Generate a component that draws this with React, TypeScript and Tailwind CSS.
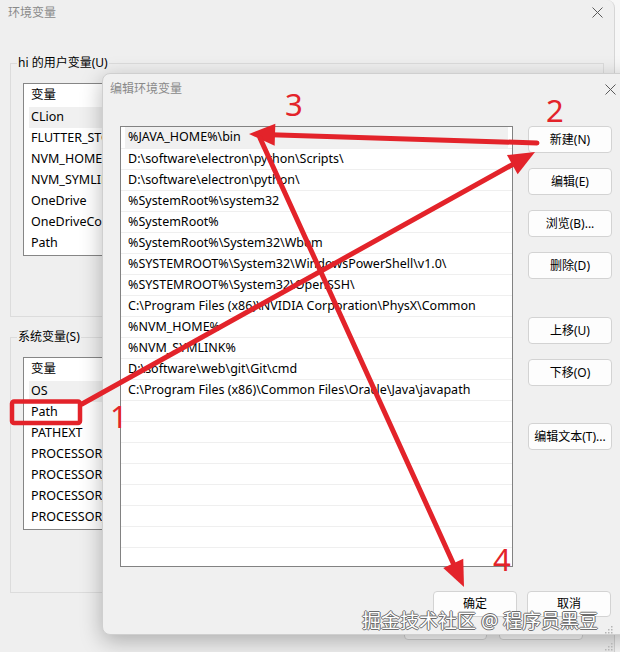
import React from "react";

const RED = "#e3232a";

const userVars = ["CLion", "FLUTTER_STORAGE_BASE_URL", "NVM_HOME", "NVM_SYMLINK", "OneDrive", "OneDriveConsumer", "Path"];
const sysVars = ["OS", "Path", "PATHEXT", "PROCESSOR_ARCHITECTURE", "PROCESSOR_IDENTIFIER", "PROCESSOR_LEVEL", "PROCESSOR_REVISION"];
const pathEntries = [
  "%JAVA_HOME%\\bin",
  "D:\\software\\electron\\python\\Scripts\\",
  "D:\\software\\electron\\python\\",
  "%SystemRoot%\\system32",
  "%SystemRoot%",
  "%SystemRoot%\\System32\\Wbem",
  "%SYSTEMROOT%\\System32\\WindowsPowerShell\\v1.0\\",
  "%SYSTEMROOT%\\System32\\OpenSSH\\",
  "C:\\Program Files (x86)\\NVIDIA Corporation\\PhysX\\Common",
  "%NVM_HOME%",
  "%NVM_SYMLINK%",
  "D:\\software\\web\\git\\Git\\cmd",
  "C:\\Program Files (x86)\\Common Files\\Oracle\\Java\\javapath",
];

function CloseIcon() {
  return (
    <svg width="11" height="11" viewBox="0 0 11 11">
      <path d="M0.5 0.5 L10.5 10.5 M10.5 0.5 L0.5 10.5" stroke="#5a5a5a" strokeWidth="1" fill="none" />
    </svg>
  );
}

function WinButton({ label, className = "" }: { label: string; className?: string }) {
  return (
    <div
      className={`flex h-[27px] w-[84px] items-center justify-center rounded-[4px] border border-[#d3d3d3] bg-[#fdfdfd] text-[12px] text-black ${className}`}
    >
      {label}
    </div>
  );
}

function VarList({ items }: { items: string[] }) {
  return (
    <div className="h-[173px] w-[560px] overflow-hidden border border-[#868686] bg-white">
      <div className="flex h-[23px] items-center pl-[7px] text-[12.5px] text-black">变量</div>
      {items.map((name, i) => (
        <div key={name} className="flex h-[21px] items-center px-[5px]">
          <div className={`flex h-full w-full items-center pl-[2px] text-[12.5px] text-black ${i === 0 ? "bg-[#f0f0f0]" : ""}`}>
            {name}
          </div>
        </div>
      ))}
    </div>
  );
}

function GroupBox({ title, items, className = "" }: { title: string; items: string[]; className?: string }) {
  return (
    <fieldset className={`mx-[10px] h-[264px] border border-[#dcdcdc] ${className}`}>
      <legend className="ml-[6px] px-[1px] text-[12px] leading-[16px] text-black">{title}</legend>
      <div className="px-[12px] pt-[12px]">
        <VarList items={items} />
      </div>
    </fieldset>
  );
}

// one straight arrow: shaft plus a filled triangular head ending at (x2, y2)
function Arrow({ x1, y1, x2, y2 }: { x1: number; y1: number; x2: number; y2: number }) {
  const len = 26;
  const half = 11;
  const dx = x2 - x1;
  const dy = y2 - y1;
  const d = Math.hypot(dx, dy);
  const ux = dx / d;
  const uy = dy / d;
  const bx = x2 - ux * len;
  const by = y2 - uy * len;
  const px = -uy;
  const py = ux;
  const pts = `${x2},${y2} ${bx + px * half},${by + py * half} ${bx - px * half},${by - py * half}`;
  return (
    <g>
      <line x1={x1} y1={y1} x2={bx + ux * 4} y2={by + uy * 4} stroke={RED} strokeWidth="5" strokeLinecap="round" />
      <polygon points={pts} fill={RED} />
    </g>
  );
}

function Grip({ x, y }: { x: number; y: number }) {
  const dots = [
    [6, 0],
    [3, 3],
    [6, 3],
    [0, 6],
    [3, 6],
    [6, 6],
  ];
  return (
    <g>
      {dots.map(([dx, dy], i) => (
        <rect key={i} x={x + dx} y={y + dy} width="1.5" height="1.5" fill="#b5b5b5" />
      ))}
    </g>
  );
}

export default function App() {
  return (
    <div className="relative h-[652px] w-[620px] overflow-hidden bg-[#f7f7f7] font-['Noto_Sans','Noto_Sans_CJK_SC',sans-serif]">
      {/* environment variables window */}
      <div className="absolute left-0 top-0 flex h-[652px] w-[615px] flex-col rounded-tr-[8px] border-r border-[#d6d6d6] bg-[#efefef]">
        <div className="flex h-[25px] items-center justify-between pl-[8px] pr-[11px]">
          <span className="text-[12px] text-[#8a8a8a]">环境变量</span>
          <CloseIcon />
        </div>
        <GroupBox title="hi 的用户变量(U)" items={userVars} className="mt-[30px] !h-[262px]" />
        <GroupBox title="系统变量(S)" items={sysVars} className="mt-[12px]" />
        <div className="mr-[31px] mt-[21px] flex justify-end gap-[12px]">
          <WinButton label="确定" className="!h-[26px] !w-[83px]" />
          <WinButton label="取消" className="!h-[26px] !w-[84px]" />
        </div>
      </div>

      {/* edit environment variable dialog */}
      <div className="absolute left-[102px] top-[73px] flex h-[562px] w-[540px] flex-col rounded-[8px] border border-[#cfcfcf] bg-[#f0f0f0] shadow-[0_6px_22px_rgba(0,0,0,0.28)]">
        <div className="flex h-[30px] items-center justify-between pl-[7px] pr-[25px]">
          <span className="text-[12px] text-[#8a8a8a]">编辑环境变量</span>
          <CloseIcon />
        </div>
        <div className="ml-[17px] mt-[22px] flex">
          <div className="h-[441px] w-[393px] overflow-hidden border border-[#828282] bg-white">
            {Array.from({ length: 22 }).map((_, i) => (
              <div
                key={i}
                className={`flex items-center border-b border-[#efefef] px-[4px] ${i === 0 ? "h-[22px]" : "h-[21px]"}`}
              >
                <div
                  className={`flex h-full w-full items-center whitespace-nowrap pl-[3px] text-[12.5px] text-black ${
                    i === 0 ? "bg-[#f0f0f0]" : ""
                  }`}
                >
                  {pathEntries[i] ?? ""}
                </div>
              </div>
            ))}
          </div>
          <div className="ml-[15px] flex flex-col gap-[15px]">
            <WinButton label="新建(N)" />
            <WinButton label="编辑(E)" />
            <WinButton label="浏览(B)..." />
            <WinButton label="删除(D)" />
            <WinButton label="上移(U)" className="mt-[23px]" />
            <WinButton label="下移(O)" />
            <WinButton label="编辑文本(T)..." className="mt-[22px]" />
          </div>
        </div>
        <div className="ml-[330px] mt-[24px] flex gap-[10px]">
          <WinButton label="确定" className="!h-[26px]" />
          <WinButton label="取消" className="!h-[26px]" />
        </div>
      </div>

      {/* annotations */}
      <svg className="pointer-events-none absolute left-0 top-0" width="620" height="652" viewBox="0 0 620 652">
        <Grip x={605} y={626} />
        <Grip x={605} y={643} />
        <rect x="12" y="401.5" width="68" height="21.5" rx="2" fill="none" stroke={RED} strokeWidth="4.5" />
        <Arrow x1={82} y1={404} x2={535} y2={152} />
        <Arrow x1={537} y1={143} x2={249} y2={134} />
        <Arrow x1={260} y1={138} x2={464} y2={587} />
      </svg>
      <span className="absolute left-[285px] top-[89px] text-[31px] leading-none text-[#e3232a]">3</span>
      <span className="absolute left-[546px] top-[95px] text-[31px] leading-none text-[#e3232a]">2</span>
      <span className="absolute left-[110px] top-[401px] text-[31px] leading-none text-[#e3232a]">1</span>
      <span className="absolute left-[493px] top-[544px] text-[31px] leading-none text-[#e3232a]">4</span>

      <span className="absolute left-[362px] top-[612px] whitespace-nowrap text-[19px] leading-none text-white [text-shadow:1px_0_0_#6b6b6b,-1px_0_0_#6b6b6b,0_1px_0_#6b6b6b,0_-1px_0_#6b6b6b]">
        掘金技术社区 @ 程序员黑豆
      </span>
    </div>
  );
}
